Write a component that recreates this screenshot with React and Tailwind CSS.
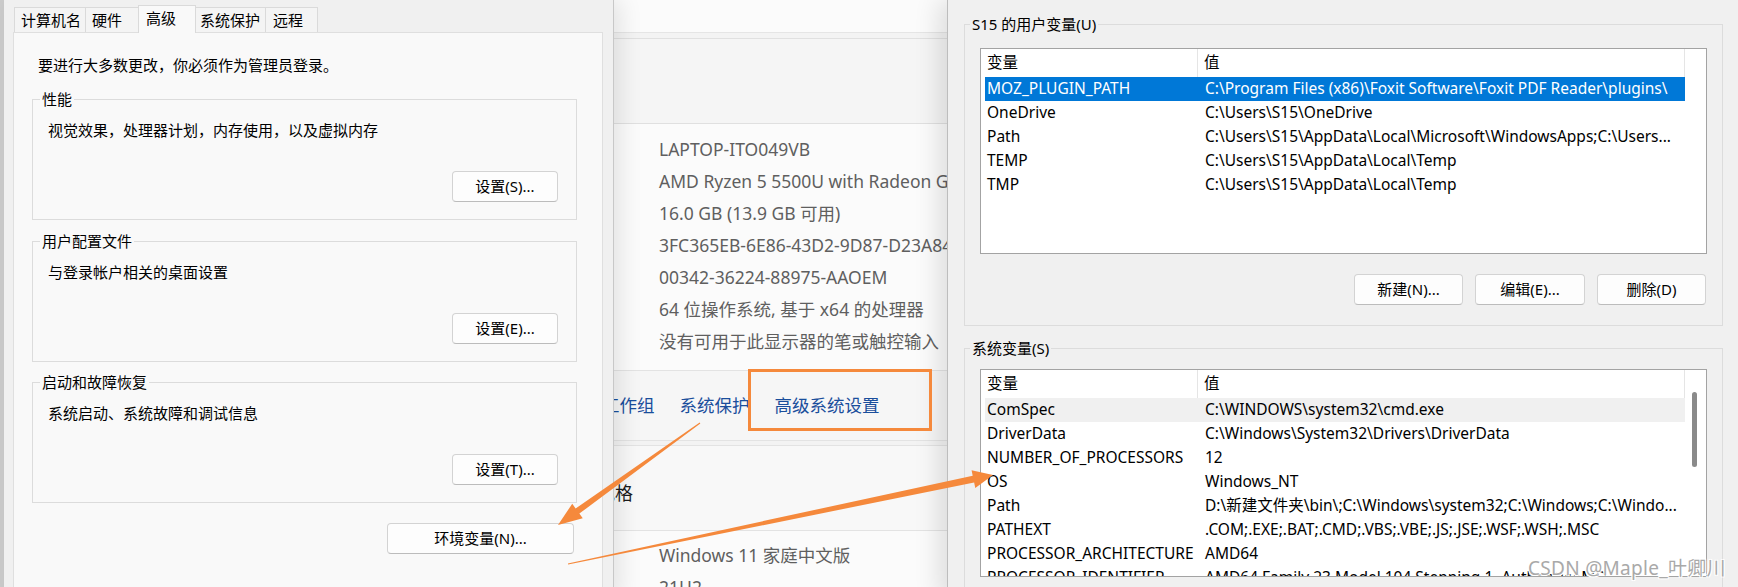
import React from 'react'

const userVars = [
    ['MOZ_PLUGIN_PATH', String.raw`C:\Program Files (x86)\Foxit Software\Foxit PDF Reader\plugins\ `.trim()],
    ['OneDrive', String.raw`C:\Users\S15\OneDrive`],
    ['Path', String.raw`C:\Users\S15\AppData\Local\Microsoft\WindowsApps;C:\Users...`],
    ['TEMP', String.raw`C:\Users\S15\AppData\Local\Temp`],
    ['TMP', String.raw`C:\Users\S15\AppData\Local\Temp`],
]

const sysVars = [
    ['ComSpec', String.raw`C:\WINDOWS\system32\cmd.exe`],
    ['DriverData', String.raw`C:\Windows\System32\Drivers\DriverData`],
    ['NUMBER_OF_PROCESSORS', '12'],
    ['OS', 'Windows_NT'],
    ['Path', String.raw`D:\新建文件夹\bin\;C:\Windows\system32;C:\Windows;C:\Windo...`],
    ['PATHEXT', '.COM;.EXE;.BAT;.CMD;.VBS;.VBE;.JS;.JSE;.WSF;.WSH;.MSC'],
    ['PROCESSOR_ARCHITECTURE', 'AMD64'],
    ['PROCESSOR_IDENTIFIER', 'AMD64 Family 23 Model 104 Stepping 1, AuthenticAMD'],
]

const specs = [
    'LAPTOP-ITO049VB',
    'AMD Ryzen 5 5500U with Radeon Graphics      2.10 GHz',
    '16.0 GB (13.9 GB 可用)',
    '3FC365EB-6E86-43D2-9D87-D23A8431E5A1',
    '00342-36224-88975-AAOEM',
    '64 位操作系统, 基于 x64 的处理器',
    '没有可用于此显示器的笔或触控输入',
]

function WinButton({ children, className }) {
    return (
        <div className={`flex items-center justify-center h-[31px] bg-[#fdfdfd] border border-[#d3d3d3] border-b-[#bcbcbc] rounded-[4px] text-[15px] text-black ${className}`}>
            {children}
        </div>
    )
}

function Group({ label, desc, button, className }) {
    return (
        <div className={`relative ml-[18px] w-[545px] border border-[#dcdcdc] pt-[20px] pb-[17px] ${className}`}>
            <span className="absolute -top-[11px] left-[7px] px-[2px] bg-[#f9f9f9] leading-[20px] text-[15px]">{label}</span>
            <div className="pl-[15px] leading-[20px] text-[15px]">{desc}</div>
            <div className="mt-[31px] flex justify-end pr-[18px]">
                <WinButton className="w-[106px]">{button}</WinButton>
            </div>
        </div>
    )
}

function VarList({ rows, selected, hover, scroll, height }) {
    return (
        <div className={`ml-[15px] w-[727px] ${height} border border-[#a3a3a3] bg-white overflow-hidden flex`}>
            <div className="w-[704px] shrink-0">
                <div className="flex h-[28px] text-[15.5px] text-black">
                    <div className="w-[217px] pl-[6px] flex items-center border-r border-[#e5e5e5]">变量</div>
                    <div className="w-[487px] pl-[6px] flex items-center border-r border-[#e5e5e5]">值</div>
                </div>
                {rows.map(([k, v], i) => (
                    <div
                        key={k + i}
                        className={`mx-[4px] w-[700px] h-[24px] flex items-center text-[15.5px] whitespace-nowrap ${i === selected ? 'bg-[#0078d7] text-white' : i === hover ? 'bg-[#f0f0f0] text-black' : 'text-black'}`}
                    >
                        <div className="w-[213px] pl-[2px] overflow-hidden">{k}</div>
                        <div className="w-[487px] pl-[7px] overflow-hidden">{v}</div>
                    </div>
                ))}
            </div>
            <div className="flex-1 pt-[22px] pl-[7px]">
                {scroll && <div className="w-[5px] h-[75px] rounded-full bg-[#8a8a8a]"></div>}
            </div>
        </div>
    )
}

export default function App() {
    return (
        <div className="relative w-[1738px] h-[587px] overflow-hidden bg-[#cdcdcd] font-['Noto_Sans','Noto_Sans_CJK_SC',sans-serif]">
            {/* middle: settings about page */}
            <div className="absolute left-[400px] top-0 w-[700px] h-[600px] bg-[#f3f3f3] z-10">
                <div className="h-[33px] bg-[#fbfbfb] border-b border-[#e5e5e5]"></div>
                <div className="h-[5px]"></div>
                <div className="h-[86px] bg-[#f5f5f5] border-t border-b border-[#e0e0e0]"></div>
                <div className="h-[246px] bg-[#fbfbfb] pt-[9px] pl-[259px] text-[17.5px] text-[#5f5f5f] whitespace-nowrap">
                    {specs.map((s) => (
                        <div key={s} className="h-[32px] flex items-center">{s}</div>
                    ))}
                </div>
                <div className="h-[71px] bg-[#f6f6f6] border-t border-b border-[#e3e3e3] flex items-center pl-[167px] gap-[25px] text-[17.5px] text-[#1a4e9c]">
                    <span>域或工作组</span>
                    <span>系统保护</span>
                    <span>高级系统设置</span>
                </div>
                <div className="h-[4px]"></div>
                <div className="h-[86px] bg-[#f8f8f8] border-t border-b border-[#e3e3e3] pt-[35px]">
                    <div className="w-[233px] text-right leading-[24px] text-[18px] text-[#1b1b1b]">Windows 规格</div>
                </div>
                <div className="bg-[#fbfbfb] pt-[8px] pl-[259px] text-[17.5px] text-[#5f5f5f]">
                    <div className="h-[32px] flex items-center">Windows 11 家庭中文版</div>
                    <div className="h-[32px] flex items-center">21H2</div>
                </div>
            </div>

            {/* left: system properties dialog */}
            <div className="absolute left-[4px] top-0 w-[610px] h-[600px] bg-[#f0f0f0] border-r border-[#c8c8c8] shadow-[6px_0_22px_rgba(0,0,0,0.10)] z-20 text-black">
                <div className="flex items-end h-[32px] pl-[10px] text-[15px]">
                    <div className="w-[71px] h-[25px] pl-[6px] flex items-center border-l border-t border-[#dadada] bg-[#f4f4f4]">计算机名</div>
                    <div className="w-[53px] h-[25px] pl-[6px] flex items-center border-l border-t border-[#dadada] bg-[#f4f4f4]">硬件</div>
                    <div className="relative z-10 -mb-px w-[58px] h-[28px] pl-[7px] pb-[3px] flex items-center border-l border-r border-t border-[#dadada] bg-[#f9f9f9]">高级</div>
                    <div className="w-[69px] h-[25px] pl-[4px] flex items-center border-t border-[#dadada] bg-[#f4f4f4]">系统保护</div>
                    <div className="w-[53px] h-[25px] pl-[7px] flex items-center border-l border-t border-r border-[#dadada] bg-[#f4f4f4]">远程</div>
                </div>
                <div className="ml-[9px] w-[590px] h-[570px] border border-[#dfdfdf] bg-[#f9f9f9] pt-[22px]">
                    <div className="pl-[24px] text-[15px] leading-[20px]">要进行大多数更改，你必须作为管理员登录。</div>
                    <Group className="mt-[24px]" label="性能" desc="视觉效果，处理器计划，内存使用，以及虚拟内存" button="设置(S)..." />
                    <Group className="mt-[21px]" label="用户配置文件" desc="与登录帐户相关的桌面设置" button="设置(E)..." />
                    <Group className="mt-[20px]" label="启动和故障恢复" desc="系统启动、系统故障和调试信息" button="设置(T)..." />
                    <WinButton className="mt-[20px] ml-[373px] w-[187px]">环境变量(N)...</WinButton>
                </div>
            </div>

            {/* right: environment variables dialog */}
            <div className="absolute left-[947px] top-0 w-[791px] h-[600px] bg-[#f0f0f0] border-l border-[#bdbdbd] shadow-[-8px_0_24px_rgba(0,0,0,0.12)] z-20 text-black">
                <div className="relative mt-[24px] ml-[16px] w-[759px] h-[302px] border border-[#dcdcdc]">
                    <span className="absolute -top-[11px] left-[5px] px-[2px] bg-[#f0f0f0] leading-[20px] text-[15px]">S15 的用户变量(U)</span>
                    <div className="h-[23px]"></div>
                    <VarList rows={userVars} selected={0} hover={-1} scroll={false} height="h-[206px]" />
                    <div className="mt-[20px] flex justify-end gap-[12px] pr-[16px]">
                        <WinButton className="w-[109px]">新建(N)...</WinButton>
                        <WinButton className="w-[110px]">编辑(E)...</WinButton>
                        <WinButton className="w-[109px]">删除(D)</WinButton>
                    </div>
                </div>
                <div className="relative mt-[22px] ml-[16px] w-[759px] h-[260px] border border-[#dcdcdc]">
                    <span className="absolute -top-[11px] left-[5px] px-[2px] bg-[#f0f0f0] leading-[20px] text-[15px]">系统变量(S)</span>
                    <div className="h-[20px]"></div>
                    <VarList rows={sysVars} selected={-1} hover={0} scroll={true} height="h-[208px]" />
                </div>
            </div>

            {/* watermark */}
            <div className="absolute left-[1528px] top-[555px] z-30 text-[19px] leading-[26px] tracking-[0.3px] text-[#a9a9a9] whitespace-nowrap [text-shadow:1px_1px_0_#fff,-1px_-1px_0_#fff,1px_-1px_0_#fff,-1px_1px_0_#fff]">
                CSDN @Maple_叶卿川
            </div>

            {/* annotations */}
            <svg className="absolute left-0 top-0 z-40 pointer-events-none" width="1738" height="587" viewBox="0 0 1738 587">
                <rect x="749.5" y="370.5" width="181" height="59" fill="none" stroke="#f5893c" strokeWidth="3" />
                <polygon
                    fill="#f5893c"
                    points="700.35,423.49 579.37,513.6 582.75,518.31 558,525 572.25,503.69 575.63,508.4 699.65,422.51"
                />
                <polygon
                    fill="#f5893c"
                    points="568.12,564.59 974.14,482.53 975.27,487.91 993,475 971.57,470.29 972.7,475.67 567.88,563.41"
                />
            </svg>
        </div>
    )
}
